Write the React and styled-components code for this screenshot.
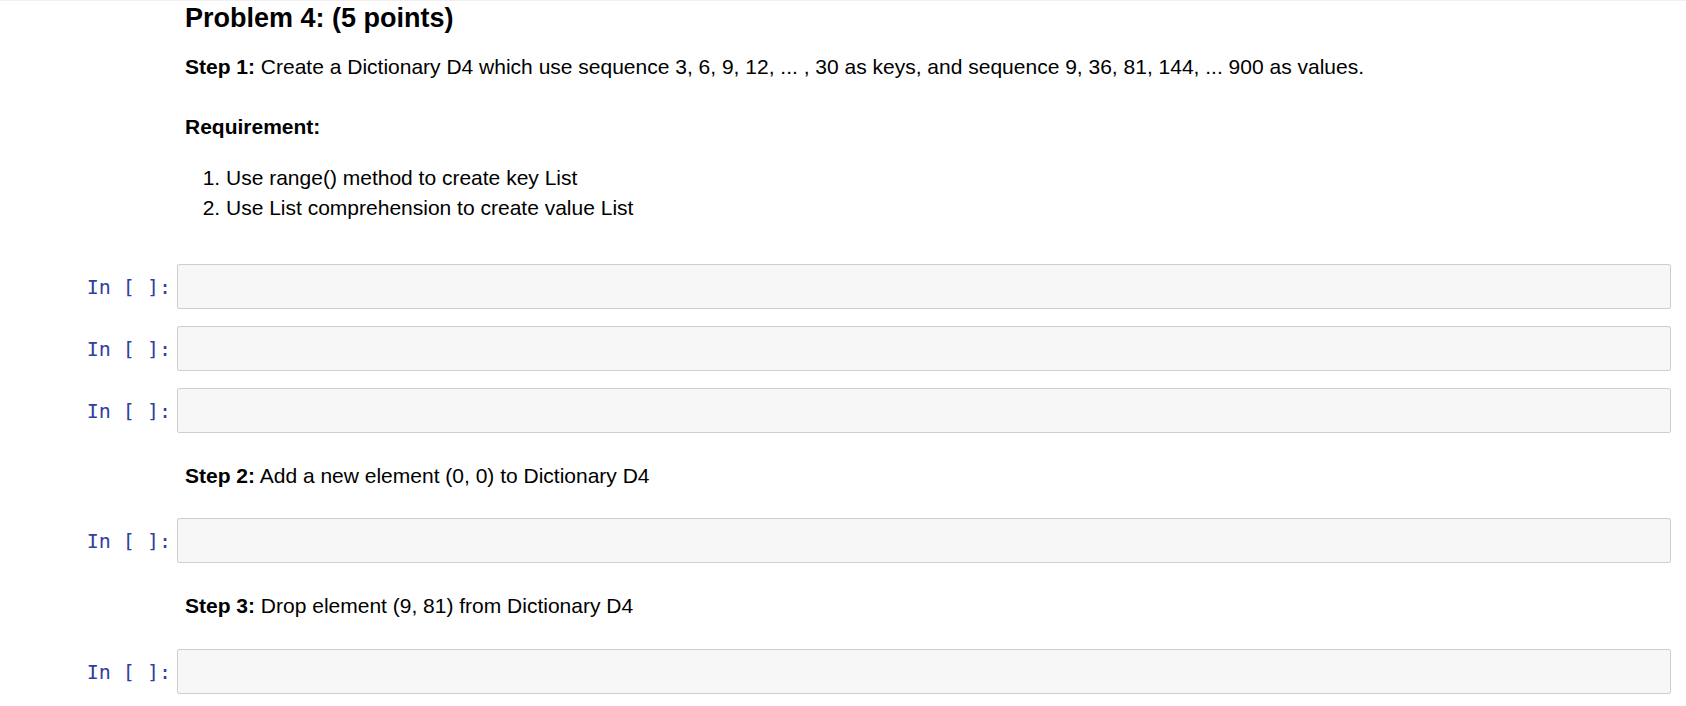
import styled, { createGlobalStyle } from "styled-components";

const GlobalStyle = createGlobalStyle`
  html, body {
    margin: 0;
    padding: 0;
    background: #fff;
  }
  body {
    font-family: "Liberation Sans", Arial, sans-serif;
    color: #000;
  }
`;

const Notebook = styled.div`
  width: 100%;
  height: 706px;
  padding-right: 15px;
  box-sizing: border-box;
  border-top: 1px solid #f0f0f0;
  overflow: hidden;
`;

const Cell = styled.div`
  display: flex;
  align-items: ${(props) => (props.code ? "center" : "flex-start")};
  margin-top: ${(props) => props.gap || 0}px;
`;

const Prompt = styled.div`
  flex: 0 0 177px;
  box-sizing: border-box;
  padding-right: 6px;
  text-align: right;
  font-family: "DejaVu Sans Mono", "Liberation Mono", monospace;
  font-size: 20px;
  color: #303f9f;
  white-space: pre;
`;

const InputArea = styled.div`
  flex: 1;
  height: 45px;
  box-sizing: border-box;
  background: #f7f7f7;
  border: 1px solid #cfcfcf;
  border-radius: 2px;
`;

const Markdown = styled.div`
  flex: 1;
  padding-left: 8px;
  font-size: 21px;
  line-height: 30px;
`;

const Heading = styled.h2`
  margin: 1px 0 0;
  font-size: 27px;
  line-height: 32px;
  font-weight: bold;
`;

const Para = styled.p`
  margin: ${(props) => props.top || 0}px 0 0;
`;

const Steps = styled.ol`
  margin: 21px 0 0;
  padding-left: 41px;
`;

function CodeCell({ gap }) {
  return (
    <Cell code gap={gap}>
      <Prompt>In [ ]:</Prompt>
      <InputArea />
    </Cell>
  );
}

function MarkdownCell({ gap, children }) {
  return (
    <Cell gap={gap}>
      <Prompt />
      <Markdown>{children}</Markdown>
    </Cell>
  );
}

export default function App() {
  return (
    <>
      <GlobalStyle />
      <Notebook>
        <MarkdownCell>
          <Heading>Problem 4: (5 points)</Heading>
          <Para top={18}>
            <b>Step 1:</b> Create a Dictionary D4 which use sequence 3, 6, 9, 12, ... , 30 as keys, and
            sequence 9, 36, 81, 144, ... 900 as values.
          </Para>
          <Para top={30}>
            <b>Requirement:</b>
          </Para>
          <Steps>
            <li>Use range() method to create key List</li>
            <li>Use List comprehension to create value List</li>
          </Steps>
        </MarkdownCell>

        <CodeCell gap={41} />
        <CodeCell gap={17} />
        <CodeCell gap={17} />

        <MarkdownCell gap={28}>
          <Para>
            <b>Step 2:</b> Add a new element (0, 0) to Dictionary D4
          </Para>
        </MarkdownCell>

        <CodeCell gap={27} />

        <MarkdownCell gap={28}>
          <Para>
            <b>Step 3:</b> Drop element (9, 81) from Dictionary D4
          </Para>
        </MarkdownCell>

        <CodeCell gap={28} />
      </Notebook>
    </>
  );
}
